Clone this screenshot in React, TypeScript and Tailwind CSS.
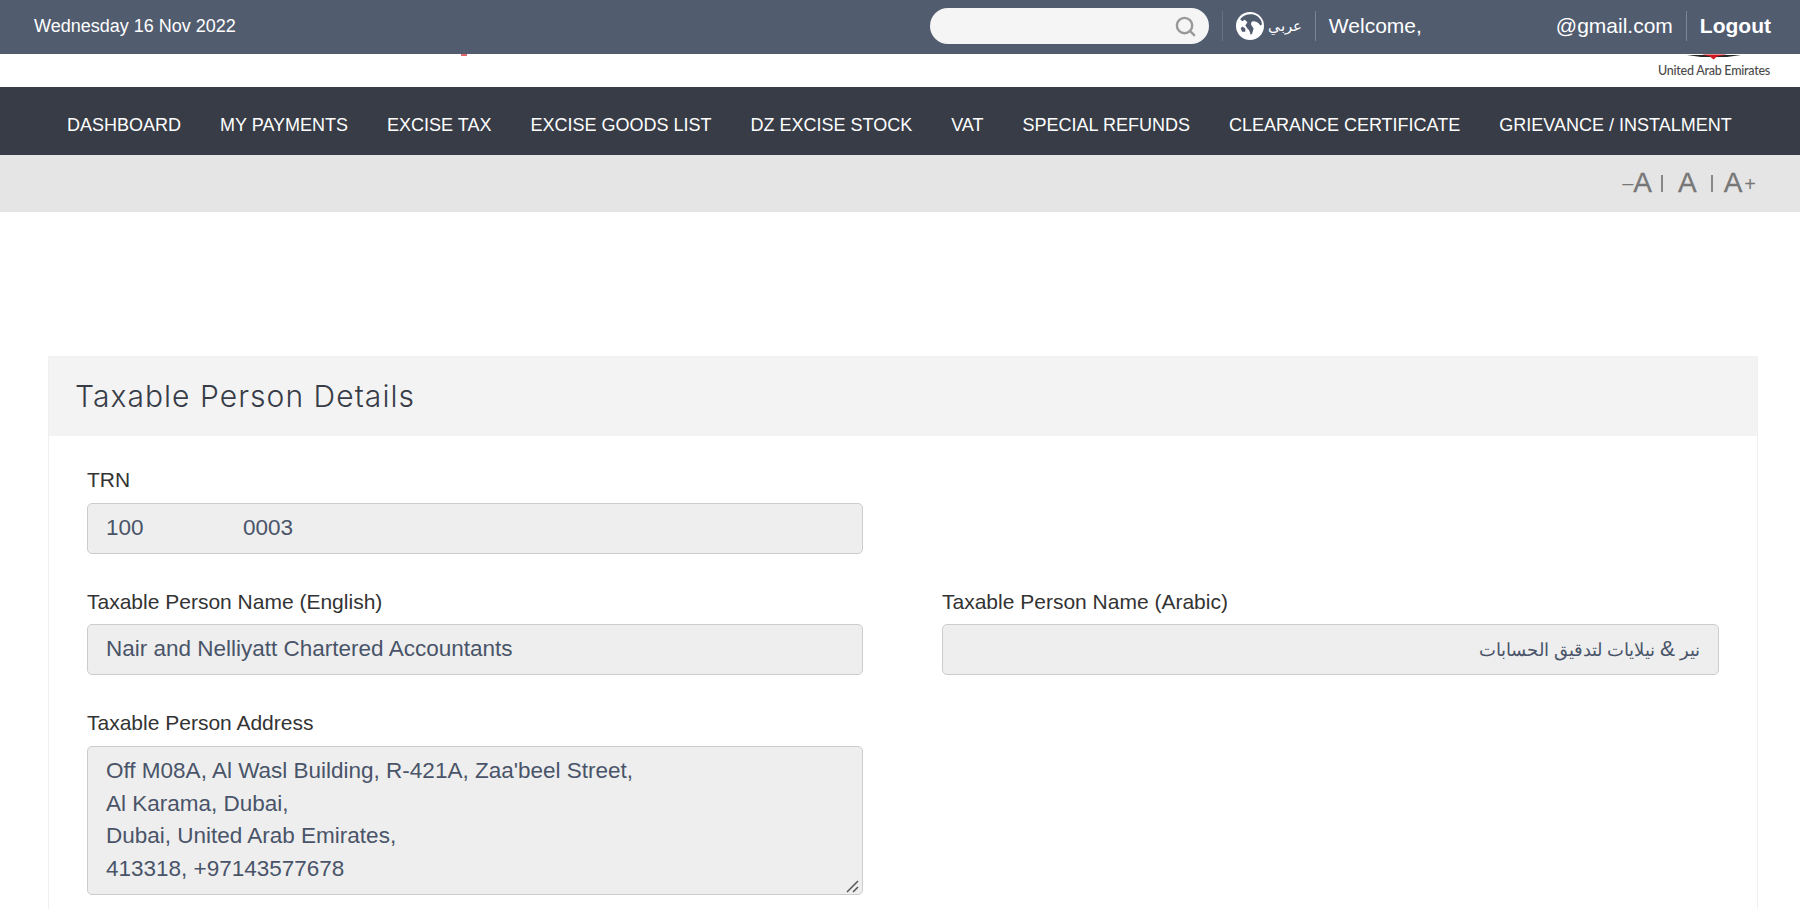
import { Search } from "lucide-react";

const nav = ["DASHBOARD", "MY PAYMENTS", "EXCISE TAX", "EXCISE GOODS LIST", "DZ EXCISE STOCK", "VAT", "SPECIAL REFUNDS", "CLEARANCE CERTIFICATE", "GRIEVANCE / INSTALMENT"];

function Globe() {
  return (
    <svg width="28" height="28" viewBox="0 0 27 27" className="shrink-0">
      <circle cx="13.5" cy="13.5" r="13.5" fill="#ffffff" />
      <path d="M4 7 C7 3 12 1.5 17 2.5 C22 4 25 8 25 12 L23.5 13 C22 10.5 19.5 9 16 9 C14.5 10 14 11.5 15 13 L17 16 L15.5 21 L14 22 C13.5 19 12.5 17 11 16 L9 13 L11 10 L8.5 7.5 L6 9 Z" fill="#515c6f" />
      <path d="M6 14 L9 16 L9 19 L6 19 L4.5 16 Z" fill="#515c6f" />
    </svg>
  );
}

export default function App() {
  return (
    <div className="h-[909px] w-[1800px] overflow-hidden bg-white font-['Liberation_Sans',Arial,sans-serif]">
      <header className="flex h-[54px] items-center bg-[#515c6f] pb-[2px] pl-[34px] pr-[29px] text-white">
        <div className="text-[18px]">Wednesday 16 Nov 2022</div>
        <div className="ml-auto flex items-center">
          <div className="flex h-9 w-[279px] items-center justify-end rounded-[18px] bg-[#f5f5f5] pr-[12px]">
            <Search size={23} strokeWidth={2.5} className="text-[#999999]" />
          </div>
          <div className="ml-[13px] h-[30px] w-px bg-[#66707f]" />
          <div className="ml-[13px] flex items-center gap-[4px]">
            <Globe />
            <span dir="rtl" className="w-[34px] whitespace-nowrap text-[15px] text-white">عربي</span>
          </div>
          <div className="ml-[13px] h-[30px] w-px bg-[#7b8594]" />
          <div className="ml-[13px] w-[227px] text-[21px]">Welcome,</div>
          <div className="text-[21px]">@gmail.com</div>
          <div className="ml-[13px] h-[30px] w-px bg-[#7b8594]" />
          <div className="ml-[13px] text-[21px] font-bold">Logout</div>
        </div>
      </header>

      <div className="relative h-[33px] bg-white">
        <div className="absolute left-[461px] top-0 h-[2px] w-[6px] bg-[#e2676c]" />
        <svg width="54" height="6" viewBox="0 0 54 6" className="absolute left-[1687px] top-0">
          <path d="M0 1 L54 1 L40 3 L14 3 Z" fill="#262626" />
          <path d="M15 0.5 L40 0.5 L30 2.5 L26.5 5.5 L23 2.5 Z" fill="#d2181f" />
        </svg>
        <div className="absolute left-[1657px] top-[8px] w-[114px] whitespace-nowrap text-center font-['Lato',sans-serif] text-[12.5px] font-medium leading-[18px] tracking-[-0.25px] text-[#4a4a4a]">United Arab Emirates</div>
      </div>

      <nav className="flex h-[68px] items-center gap-[39px] bg-[#373c47] pl-[67px] pt-[9px] text-[18px] text-white">
        {nav.map((n) => (
          <span key={n} className="whitespace-nowrap">{n}</span>
        ))}
      </nav>

      <div className="flex h-[57px] items-center justify-end bg-[#e5e5e5] pb-[2px] pr-[44px] text-[#777777]">
        <span className="text-[20px] leading-none">–</span>
        <span className="text-[28px] leading-none [-webkit-text-stroke:0.3px_#777777]">A</span>
        <span className="ml-[9px] mt-[2px] h-[17px] w-[2px] bg-[#888888]" />
        <span className="ml-[15px] text-[28px] leading-none [-webkit-text-stroke:0.3px_#777777]">A</span>
        <span className="ml-[14px] mt-[2px] h-[17px] w-[2px] bg-[#888888]" />
        <span className="ml-[11px] text-[28px] leading-none [-webkit-text-stroke:0.3px_#777777]">A</span>
        <span className="ml-[2px] mt-[3px] text-[20px] leading-none">+</span>
      </div>

      <main className="pl-[48px] pr-[42px] pt-[144px]">
        <section className="h-[600px] border border-[#f0f0f0]">
          <div className="flex h-[79px] items-center bg-[#f3f3f3] pl-[26px] font-['Inter',sans-serif] text-[30px] font-light tracking-[1.05px] text-[#373c47]">
            Taxable Person Details
          </div>
          <div className="grid grid-cols-[776px_777px] gap-x-[79px] pl-[38px] pt-[29px]">
            <div>
              <label className="block h-[38px] text-[21px] leading-[30px] text-[#333333]">TRN</label>
              <div className="flex h-[51px] items-center rounded-[5px] border border-[#cccccc] bg-[#eeeeee] pb-[2px] pl-[18px] text-[22.5px] text-[#495469]">
                <span className="w-[137px]">100</span>
                <span>0003</span>
              </div>
            </div>
            <div />
            <div className="mt-[33px]">
              <label className="block h-[37px] text-[21px] leading-[30px] text-[#333333]">Taxable Person Name (English)</label>
              <div className="flex h-[51px] items-center rounded-[5px] border border-[#cccccc] bg-[#eeeeee] pb-[2px] pl-[18px] text-[22.5px] text-[#495469]">
                Nair and Nelliyatt Chartered Accountants
              </div>
            </div>
            <div className="mt-[33px]">
              <label className="block h-[37px] text-[21px] leading-[30px] text-[#333333]">Taxable Person Name (Arabic)</label>
              <div dir="rtl" className="flex h-[51px] items-center rounded-[5px] border border-[#cccccc] bg-[#eeeeee] pb-[2px] pr-[18px] text-[18px] text-[#495469]">
                <span>نير <span className="text-[22.5px]">&amp;</span> نيلايات لتدقيق الحسابات</span>
              </div>
            </div>
            <div className="mt-[33px]">
              <label className="block h-[38px] text-[21px] leading-[30px] text-[#333333]">Taxable Person Address</label>
              <div className="relative h-[149px] rounded-[5px] border border-[#cccccc] bg-[#eeeeee] pl-[18px] pt-[8px] text-[22.5px] leading-[32.6px] text-[#495469]">
                <div>Off M08A, Al Wasl Building, R-421A, Zaa'beel Street,</div>
                <div>Al Karama, Dubai,</div>
                <div>Dubai, United Arab Emirates,</div>
                <div>413318, +97143577678</div>
                <svg width="14" height="14" viewBox="0 0 14 14" className="absolute bottom-[1px] right-[2px]">
                  <path d="M1 13 L12 2 M7 13 L12 8" stroke="#555555" strokeWidth="1.5" fill="none" />
                </svg>
              </div>
            </div>
          </div>
        </section>
      </main>
    </div>
  );
}
